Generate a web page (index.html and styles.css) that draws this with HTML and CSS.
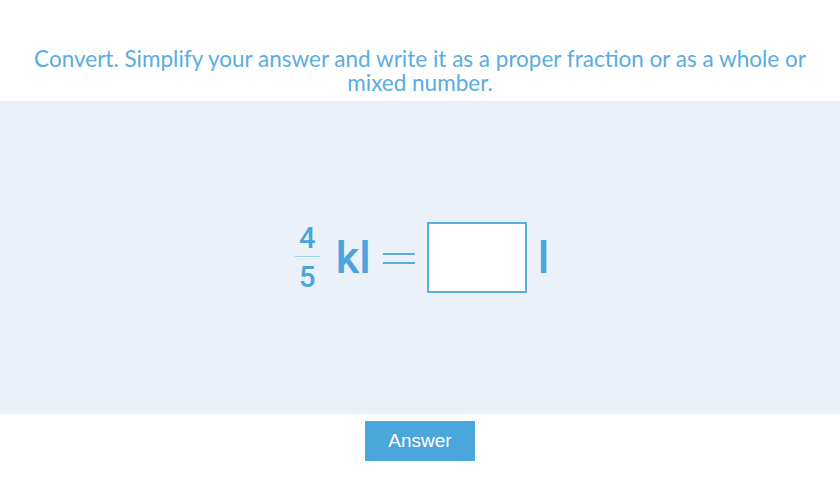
FILE: index.html
```html
<!DOCTYPE html>
<html lang="en">

<head>
  <meta charset="UTF-8" />
  <title>Convert units</title>
  <link rel="stylesheet" href="styles.css">
</head>

<body>

  <div class="question">
    <p class="prompt">Convert. Simplify your answer and write it as a proper fraction or as a whole or mixed number.</p>
  </div>

  <div class="work-area">
    <div class="equation">
      <span class="fraction">
        <span class="num">4</span>
        <span class="bar"></span>
        <span class="den">5</span>
      </span>
      <span class="unit unit-from">kl</span>
      <span class="equals"></span>
      <input type="text" class="answer-box" aria-label="answer">
      <span class="unit unit-to">l</span>
    </div>
  </div>

  <div class="actions">
    <button class="answer-btn">Answer</button>
  </div>

</body>

</html>
```

FILE: styles.css
```css
body {
  margin: 0;
  padding: 0;
  background: #ffffff;
  font-family: Lato, 'Open Sans', sans-serif;
}

.question {
  padding: 47px 20px 0;
  height: 54px;
}

.prompt {
  margin: 0;
  text-align: center;
  font-size: 22.5px;
  line-height: 24px;
  color: #5aace2;
}

.work-area {
  background: #eaf1f9;
  height: 313px;
  display: flex;
  justify-content: center;
  align-items: center;
}

.equation {
  display: flex;
  align-items: center;
  color: #4aa3dc;
  font-family: Roboto, 'Liberation Sans', sans-serif;
  padding-left: 4px;
}

.fraction {
  display: flex;
  flex-direction: column;
  align-items: center;
  width: 25px;
  font-size: 29px;
  line-height: 28px;
  font-weight: 500;
  margin-right: 16px;
}

.fraction .bar {
  width: 25px;
  height: 1px;
  background: #a6d0ee;
  margin: 4px 0 6px;
}

.unit {
  font-size: 45px;
  line-height: 50px;
  font-weight: 500;
}

.unit-from {
  margin-right: 12px;
}

.equals {
  width: 32px;
  height: 7px;
  border-top: 2px solid #5aace2;
  border-bottom: 2px solid #5aace2;
  margin-right: 12px;
  margin-top: 1px;
}

.answer-box {
  box-sizing: border-box;
  width: 100px;
  height: 71px;
  padding: 0;
  margin: 0 11px 0 0;
  border: 2px solid #5aaee0;
  background: #ffffff;
  outline: none;
  font-size: 24px;
}

.actions {
  display: flex;
  justify-content: center;
  padding-top: 7px;
}

.answer-btn {
  width: 110px;
  height: 40px;
  border: none;
  background: #4ba6dc;
  color: #ffffff;
  font-family: 'Liberation Sans', Arial, sans-serif;
  font-size: 19px;
  cursor: pointer;
}
```
